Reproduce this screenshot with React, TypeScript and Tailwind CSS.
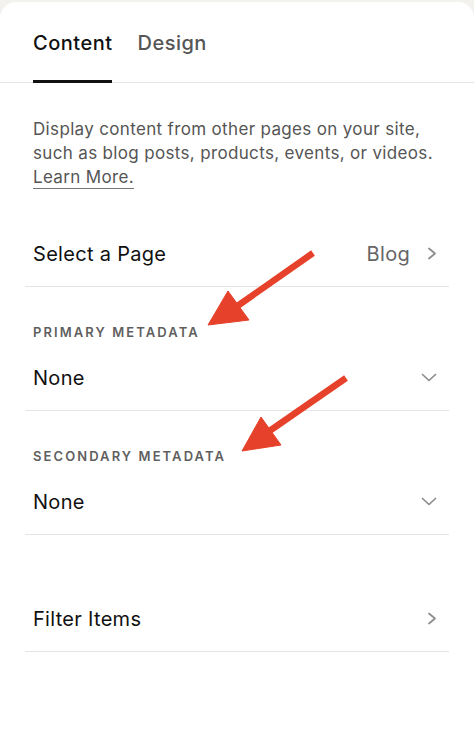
function ChevronRightIcon() {
  return (
    <svg width="10" height="13" viewBox="0 0 10 13" fill="none" stroke="#8c8c8c" strokeWidth="1.7" strokeLinecap="round" strokeLinejoin="round">
      <polyline points="2,1.5 8,6.5 2,11.5" />
    </svg>
  );
}

function ChevronDownIcon() {
  return (
    <svg width="16" height="9" viewBox="0 0 16 9" fill="none" stroke="#8c8c8c" strokeWidth="1.7" strokeLinecap="round" strokeLinejoin="round">
      <polyline points="1.5,1.5 8,7.5 14.5,1.5" />
    </svg>
  );
}

function Row({ label, value, down = false }: { label: string; value?: string; down?: boolean }) {
  return (
    <div className="flex h-[66px] items-center justify-between border-b border-[#e4e4e4] pl-2 pr-[12px]">
      <span className="text-[20px] leading-7 tracking-[0.015em] text-[#111]">{label}</span>
      <div className="flex items-center gap-[17px]">
        {value && <span className="text-[20px] leading-7 tracking-[0.015em] text-[#666]">{value}</span>}
        {down ? <ChevronDownIcon /> : <ChevronRightIcon />}
      </div>
    </div>
  );
}

function Label({ children }: { children: string }) {
  return (
    <div className="pl-2 pt-[37px] text-[13px] font-semibold uppercase leading-4 tracking-[0.16em] text-[#5f5f5f]">
      {children}
    </div>
  );
}

export default function App() {
  return (
    <div
      className="relative h-[746px] w-[474px] overflow-hidden bg-[#f3f2ee] pt-[2px]"
      style={{ fontFamily: "Inter, 'Liberation Sans', sans-serif" }}
    >
      <div className="h-full rounded-t-[16px] bg-white">
        {/* Tabs */}
        <div className="flex h-[81px] gap-[25px] border-b border-[#e4e4e4] px-[33px]">
          <div className="-mb-px border-b-[3px] border-[#111] pt-[27px] text-[20px] font-medium leading-7 tracking-[0.025em] text-[#111]">
            Content
          </div>
          <div className="pt-[27px] text-[20px] font-medium leading-7 tracking-[0.025em] text-[#555]">Design</div>
        </div>

        <div className="px-[25px]">
          <div className="mt-[34px] whitespace-nowrap pl-2 text-[17px] leading-6 tracking-[0.02em] text-[#555]">
            <div>Display content from other pages on your site,</div>
            <div>such as blog posts, products, events, or videos.</div>
            <div>
              <span className="underline decoration-[#777] decoration-1 underline-offset-[5px]">Learn More.</span>
            </div>
          </div>

          <div className="mt-[32px]">
            <Row label="Select a Page" value="Blog" />
          </div>

          <Label>Primary Metadata</Label>
          <div className="mt-[5px]">
            <Row label="None" down />
          </div>

          <Label>Secondary Metadata</Label>
          <div className="mt-[5px]">
            <Row label="None" down />
          </div>

          <div className="mt-[51px]">
            <Row label="Filter Items" />
          </div>
        </div>
      </div>

      {/* annotation arrows */}
      <svg className="pointer-events-none absolute left-0 top-0" width="474" height="746" viewBox="0 0 474 746">
        <g fill="#e6412a" stroke="#e6412a">
          <line x1="313" y1="253" x2="236" y2="307" strokeWidth="6.5" strokeLinecap="butt" />
          <polygon points="208,325 228,291 249,320" strokeWidth="1" strokeLinejoin="round" />
          <line x1="346" y1="378" x2="268" y2="432" strokeWidth="6.5" strokeLinecap="butt" />
          <polygon points="242,451 261,417 281,445" strokeWidth="1" strokeLinejoin="round" />
        </g>
      </svg>
    </div>
  );
}
